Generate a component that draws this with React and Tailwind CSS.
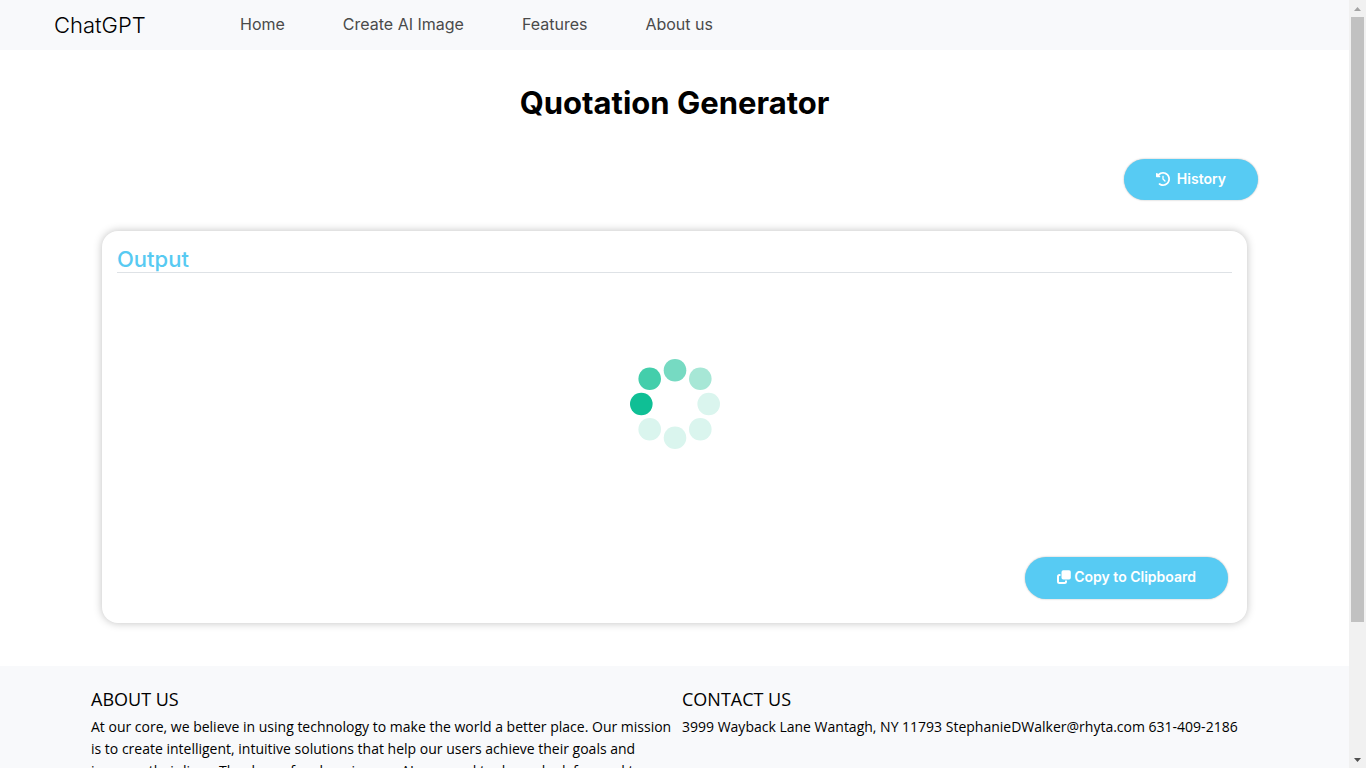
import { FaClockRotateLeft } from 'react-icons/fa6'

const LINKS = ['Home', 'Create AI Image', 'Features', 'About us']

const DOTS = [
  { cx: 45, cy: 11.3, fill: '#76dac2' },
  { cx: 70.3, cy: 19.7, fill: '#a7e7d6' },
  { cx: 78.7, cy: 45, fill: '#daf5ee' },
  { cx: 70.3, cy: 70.3, fill: '#daf5ee' },
  { cx: 45, cy: 78.7, fill: '#daf5ee' },
  { cx: 19.7, cy: 70.3, fill: '#daf5ee' },
  { cx: 11.3, cy: 45, fill: '#0fbf95' },
  { cx: 19.7, cy: 19.7, fill: '#43ceab' },
]

function Navbar() {
  return (
    <nav className="flex h-[50px] items-center bg-[#f8f9fb] pl-[54px]">
      <a href="#" className="w-[186px] text-[22px] font-light text-black">ChatGPT</a>
      <div className="flex gap-[58px] pb-[2px]">
        {LINKS.map(link => (
          <a key={link} href="#" className="text-[16px] text-[#4a4a4a]">{link}</a>
        ))}
      </div>
    </nav>
  )
}

function Spinner() {
  return (
    <svg viewBox="0 0 90 90" className="size-[90px]" role="status" aria-label="Loading">
      {DOTS.map((dot, i) => (
        <circle key={i} cx={dot.cx} cy={dot.cy} r="11.3" fill={dot.fill} />
      ))}
    </svg>
  )
}

function CopyIcon() {
  return (
    <svg viewBox="0 0 14 14" className="size-[14px]" fill="none" aria-hidden="true">
      <path d="M3.5 5H2.5Q1 5 1 6.5V11.5Q1 13 2.5 13H7.5Q9 13 9 11.500V10.5" stroke="currentColor" strokeWidth="2" />
      <rect x="4.5" y="0.3" width="9.3" height="9.3" rx="1.8" fill="currentColor" />
    </svg>
  )
}

function Output() {
  return (
    <section className="mx-[102px] mt-[31px] flex flex-col rounded-2xl bg-white px-[15px] pt-4 pb-6 shadow-[0_0_8px_rgba(0,0,0,0.25)]">
      <h2 className="border-b border-[#dee2e6] text-[22px] leading-[25px] font-medium text-[#57caf2]">Output</h2>
      <div className="flex justify-center pt-[86px] pb-[108px]">
        <Spinner />
      </div>
      <button className="mr-1 flex h-[42px] items-center gap-[3px] self-end rounded-full bg-[#57cbf3] px-8 pb-[3px] text-[14px] font-semibold text-white shadow-[0_0_2px_rgba(0,0,0,0.3)]">
        <CopyIcon />
        Copy to Clipboard
      </button>
    </section>
  )
}

function Footer() {
  return (
    <footer className="mt-[43px] grid grid-cols-2 gap-2 bg-[#f8f9fb] pt-[22px] pr-[84px] pb-10 pl-[91px] font-['Open_Sans',sans-serif] text-black">
      <div>
        <h3 className="text-[18px] leading-[22px] font-medium">ABOUT US</h3>
        <p className="mt-[6px] text-[14px] leading-[22px]">
          At our core, we believe in using technology to make the world a better place. Our mission is to create
          intelligent, intuitive solutions that help our users achieve their goals and improve their lives. Thank you
          for choosing our AI-powered tools, we look forward to working with you.
        </p>
      </div>
      <div>
        <h3 className="text-[18px] leading-[22px] font-medium">CONTACT US</h3>
        <p className="mt-[6px] text-[14px] leading-[22px]">
          3999 Wayback Lane Wantagh, NY 11793 StephanieDWalker@rhyta.com 631-409-2186
        </p>
      </div>
    </footer>
  )
}

function Scrollbar() {
  return (
    <div className="flex w-[17px] shrink-0 flex-col items-center bg-[#f1f1f1]" aria-hidden="true">
      <svg viewBox="0 0 17 17" className="size-[17px]"><path d="M5 11h7L8.5 7z" fill="#a3a3a3" /></svg>
      <div className="w-[13px] flex-[605] bg-[#c1c1c1]" />
      <div className="flex-[129]" />
      <svg viewBox="0 0 17 17" className="size-[17px]"><path d="M5 7h7L8.5 11z" fill="#505050" /></svg>
    </div>
  )
}

export default function App() {
  return (
    <div className="flex h-screen bg-white font-[Inter,sans-serif]">
      <div className="min-w-0 flex-1 overflow-hidden">
        <Navbar />
        <main className="flex flex-col">
          <h1 className="mt-[31px] text-center text-[31px] leading-[44px] font-bold text-black">Quotation Generator</h1>
          <button className="mt-[34px] mr-[91px] flex h-[41px] items-center gap-[7px] self-end rounded-full bg-[#57cbf3] px-8 pb-[2px] text-[14px] font-semibold text-white shadow-[0_0_2px_rgba(0,0,0,0.3)]">
            <FaClockRotateLeft className="size-[14px]" />
            History
          </button>
          <Output />
        </main>
        <Footer />
      </div>
      <Scrollbar />
    </div>
  )
}
